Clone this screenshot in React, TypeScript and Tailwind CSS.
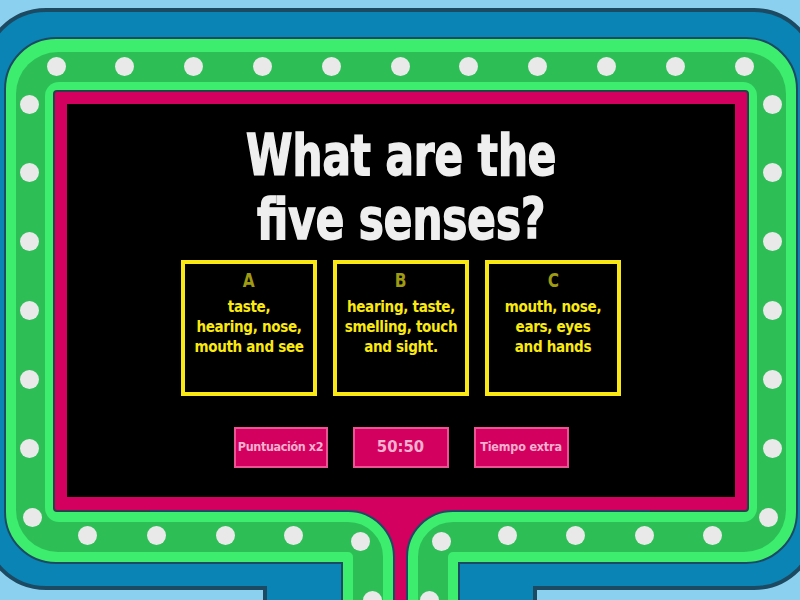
import React from 'react'

const OUTLINE = '#1d4a63'
const BRIGHT = '#3ded6e'
const DARK = '#2dbe56'
const PINK = '#d4005f'

const step = 68.8
const dots: [number, number][] = [
  ...Array.from({ length: 11 }, (_, i) => [56 + i * step, 66] as [number, number]),
  ...Array.from({ length: 6 }, (_, i) => [29, 104 + i * step] as [number, number]),
  ...Array.from({ length: 6 }, (_, i) => [772, 104 + i * step] as [number, number]),
  [32, 517], [768, 517],
  [87, 535], [156, 535], [225, 535], [293, 535],
  [507, 535], [575, 535], [644, 535], [712, 535],
  [360, 541], [372, 600], [441, 541], [429, 600],
]

const answers = [
  { letter: 'A', lines: ['taste,', 'hearing, nose,', 'mouth and see'] },
  { letter: 'B', lines: ['hearing, taste,', 'smelling, touch', 'and sight.'] },
  { letter: 'C', lines: ['mouth, nose,', 'ears, eyes', 'and hands'] },
]

function Stand() {
  // pedestal under the screen: pink stem with the green band bending down on each side
  return (
    <svg className="absolute left-[150px] top-[490px] z-20 w-[500px] h-[110px]" viewBox="150 490 500 110">
      <rect x="336" y="505" width="129" height="50" fill={PINK} />
      <rect x="380" y="505" width="41" height="100" fill={PINK} />
      {[
        'M150 537 H348 A20 20 0 0 1 368 557 V620',
        'M650 537 H453 A20 20 0 0 0 433 557 V620',
      ].map(d => (
        <g key={d} fill="none">
          <path d={d} stroke={OUTLINE} strokeWidth="54" />
          <path d={d} stroke={BRIGHT} strokeWidth="50" />
          <path d={d} stroke={DARK} strokeWidth="30" />
        </g>
      ))}
    </svg>
  )
}

const btn = 'h-[41px] border-2 border-[#ec5395] bg-[#d4005f] font-bold text-[#f5b0d0] whitespace-nowrap flex items-center justify-center'

export default function App() {
  return (
    <div className="relative w-[800px] h-[600px] overflow-hidden bg-[#8bd1ef] pt-[37px] pl-[4px] font-['DejaVu_Sans_Condensed','DejaVu_Sans',sans-serif]">
      <div className="absolute left-[-18px] top-[8px] w-[836px] h-[582px] rounded-[64px] border-4 border-[#1d4a63] bg-[#0a84b4]" />
      <div className="absolute left-[263px] top-[586px] w-[274px] h-[20px] border-x-4 border-[#1d4a63] bg-[#0a84b4]" />

      <div className="relative z-10 w-[794px] h-[527px] rounded-[52px] border-2 border-[#1d4a63] bg-[#3ded6e] px-[10px] pt-[13px] pb-[10px]">
        <div className="h-full rounded-[42px] bg-[#2dbe56] px-[29px] py-[30px]">
          <div className="h-full rounded-[14px] bg-[#3ded6e] px-[8px] pt-[8px] pb-[10px]">
            <div className="h-full rounded-[4px] border-2 border-[#2a3f4a] bg-[#d4005f] px-[12px] pt-[12px] pb-[13px]">
              <div className="h-full bg-black flex flex-col items-center pt-[19px]">
                <h1 className="text-[57px] leading-[64px] font-bold text-[#efefef] text-center scale-x-[0.82] [-webkit-text-stroke:1.5px_#efefef] whitespace-nowrap">
                  What are the
                  <br />
                  five senses?
                </h1>

                <div className="mt-[9px] flex gap-[16px]">
                  {answers.map(a => (
                    <div key={a.letter} className="w-[136px] h-[136px] border-4 border-[#f9e814] flex flex-col items-center pt-[5px]">
                      <span className="text-[19px] leading-[22px] font-bold text-[#9e9a12] scale-x-[0.9]">{a.letter}</span>
                      <p className="mt-[6px] text-[15px] leading-[20px] font-bold tracking-[-0.3px] text-[#fbea0f] text-center whitespace-nowrap">
                        {a.lines.map((l, i) => (
                          <React.Fragment key={i}>
                            {i > 0 && <br />}
                            {l}
                          </React.Fragment>
                        ))}
                      </p>
                    </div>
                  ))}
                </div>

                <div className="mt-[31px] flex gap-[25px]">
                  <button className={`${btn} w-[94px] text-[12.5px] tracking-[-0.4px]`}>Puntuación x2</button>
                  <button className={`${btn} w-[96px] text-[16.5px]`}>50:50</button>
                  <button className={`${btn} w-[95px] text-[12.5px] tracking-[-0.2px]`}>Tiempo extra</button>
                </div>
              </div>
            </div>
          </div>
        </div>
      </div>

      <Stand />

      <div className="absolute inset-0 z-30 pointer-events-none">
        {dots.map(([x, y], i) => (
          <span key={i} className="absolute w-[19px] h-[19px] rounded-full bg-[#e9e9e9]" style={{ left: x - 9.5, top: y - 9.5 }} />
        ))}
      </div>
    </div>
  )
}
